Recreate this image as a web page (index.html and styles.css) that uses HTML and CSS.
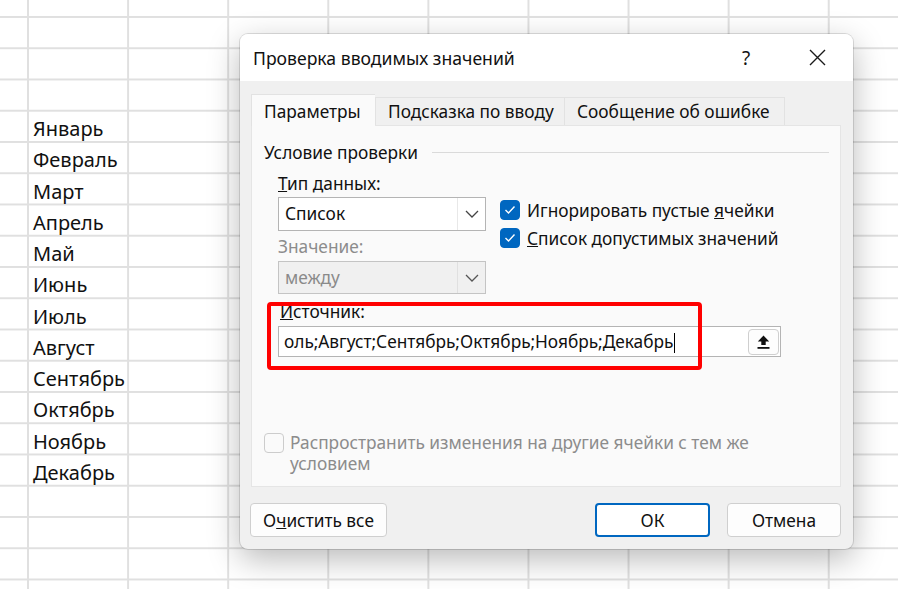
FILE: index.html
```html
<!DOCTYPE html>
<html lang="ru">
<head>
    <meta charset="UTF-8">
    <title>Проверка вводимых значений</title>
    <link rel="stylesheet" href="styles.css">
</head>
<body>
    <!-- Лист Excel -->
    <div class="sheet">
        <ul class="months">
            <li>Январь</li>
            <li>Февраль</li>
            <li>Март</li>
            <li>Апрель</li>
            <li>Май</li>
            <li>Июнь</li>
            <li>Июль</li>
            <li>Август</li>
            <li>Сентябрь</li>
            <li>Октябрь</li>
            <li>Ноябрь</li>
            <li>Декабрь</li>
        </ul>
    </div>

    <!-- Окно проверки данных -->
    <div class="dialog">
        <div class="titlebar">
            <span class="title">Проверка вводимых значений</span>
            <span class="tb-btn help">?</span>
            <span class="tb-btn close">
                <svg width="17" height="17" viewBox="0 0 17 17"><path d="M1 1 L16 16 M16 1 L1 16" stroke="#1a1a1a" stroke-width="1.4" fill="none"/></svg>
            </span>
        </div>

        <div class="dialog-body">
            <div class="tabs">
                <div class="tab active">Параметры</div>
                <div class="tab">Подсказка по вводу</div>
                <div class="tab">Сообщение об ошибке</div>
            </div>

            <div class="panel">
                <div class="group-head">
                    <span>Условие проверки</span>
                    <span class="group-line"></span>
                </div>

                <div class="fields">
                    <div class="top-row">
                        <div class="left-col">
                            <div class="label"><u>Т</u>ип данных:</div>
                            <div class="select">
                                <span class="select-value">Список</span>
                                <span class="chevron">
                                    <svg width="14" height="8" viewBox="0 0 14 8"><path d="M1 1 L7 7 L13 1" stroke="#444" stroke-width="1.3" fill="none"/></svg>
                                </span>
                            </div>
                            <div class="label disabled">Значение:</div>
                            <div class="select disabled">
                                <span class="select-value">между</span>
                                <span class="chevron">
                                    <svg width="14" height="8" viewBox="0 0 14 8"><path d="M1 1 L7 7 L13 1" stroke="#555" stroke-width="1.3" fill="none"/></svg>
                                </span>
                            </div>
                        </div>
                        <div class="right-col">
                            <label class="check">
                                <span class="box checked">
                                    <svg width="12" height="10" viewBox="0 0 12 10"><path d="M1.5 5 L4.5 8 L10.5 1.5" stroke="#fff" stroke-width="1.4" fill="none"/></svg>
                                </span>
                                <span>Игнорировать пустые <u>я</u>чейки</span>
                            </label>
                            <label class="check">
                                <span class="box checked">
                                    <svg width="12" height="10" viewBox="0 0 12 10"><path d="M1.5 5 L4.5 8 L10.5 1.5" stroke="#fff" stroke-width="1.4" fill="none"/></svg>
                                </span>
                                <span><u>С</u>писок допустимых значений</span>
                            </label>
                        </div>
                    </div>

                    <div class="label source-label"><u>И</u>сточник:</div>
                    <div class="source">
                        <span class="source-text">оль;Август;Сентябрь;Октябрь;Ноябрь;Декабрь</span>
                        <span class="pick-btn">
                            <svg width="13" height="14" viewBox="0 0 13 14"><path d="M6.5 0.5 L0.8 6.5 H4.3 V10 H8.7 V6.5 H12.2 Z" fill="#111"/><rect x="0.5" y="12" width="12" height="1.8" fill="#111"/></svg>
                        </span>
                    </div>
                </div>

                <label class="check spread">
                    <span class="box"></span>
                    <span>Распространить изменения на другие ячейки с тем же<br>условием</span>
                </label>
            </div>

            <div class="buttons">
                <button class="btn">О<u>ч</u>истить все</button>
                <span class="spacer"></span>
                <button class="btn primary">ОК</button>
                <button class="btn">Отмена</button>
            </div>
        </div>

        <!-- красная рамка вокруг поля -->
        <div class="highlight"></div>
    </div>
</body>
</html>
```

FILE: styles.css
```css
body {
    margin: 0;
    font-family: "Noto Sans", "Open Sans", sans-serif;
    color: #111111;
    background: #ffffff;
    overflow: hidden;
}

/* Лист */
.sheet {
    width: 898px;
    height: 589px;
    background-image:
        linear-gradient(to right, #e0e0e0 2px, transparent 2px),
        linear-gradient(to bottom, #e0e0e0 2px, transparent 2px);
    background-size: 100.1px 100%, 100% 31.25px;
    background-position: 27px 0, 0 16px;
}

.months {
    list-style: none;
    margin: 0;
    padding: 113px 0 0 33px;
    font-size: 20px;
    line-height: 31.25px;
}

/* Окно */
.dialog {
    position: absolute;
    left: 240px;
    top: 34px;
    width: 613px;
    height: 515px;
    border-radius: 8px;
    overflow: hidden;
    background: #f0f0f0;
    box-shadow: 0 0 0 1px rgba(0, 0, 0, 0.12), 0 10px 32px rgba(0, 0, 0, 0.28);
    font-size: 17.3px;
}

.titlebar {
    height: 47px;
    background: #ffffff;
    display: flex;
    align-items: center;
    padding: 0 12px 0 13px;
}

.title {
    flex: 1;
    font-size: 17.6px;
}

.tb-btn {
    width: 48px;
    display: flex;
    justify-content: center;
    align-items: center;
}

.help {
    font-size: 19px;
    margin-right: 23px;
}

.dialog-body {
    padding: 13px 12px 12px 11px;
}

/* Вкладки */
.tabs {
    display: flex;
    align-items: flex-end;
    height: 31px;
}

.tab {
    height: 28px;
    line-height: 27px;
    padding: 0 12px;
    border: 1px solid #e2e2e2;
    border-bottom: none;
    background: #f0f0f0;
    box-sizing: border-box;
    white-space: nowrap;
}

.tab:nth-child(2) { width: 190px; }
.tab:nth-child(3) { width: 220px; border-left: none; }

.tab.active {
    width: 124px;
    height: 32px;
    line-height: 33px;
    background: #fafafa;
    border-right: none;
    position: relative;
    margin-bottom: -1px;
    z-index: 1;
}

.panel {
    height: 362px;
    box-sizing: border-box;
    background: #fafafa;
    border: 1px solid #e5e5e5;
    padding: 14px 11px 0 12px;
}

.group-head {
    display: flex;
    align-items: center;
    height: 24px;
}

.group-line {
    flex: 1;
    height: 1px;
    background: #dadada;
    margin-left: 14px;
}

.fields {
    padding-left: 14px;
}

.top-row {
    display: flex;
}

.left-col {
    width: 208px;
}

.label {
    height: 24px;
    line-height: 24px;
    margin-top: 8px;
}

.label.disabled {
    color: #8c8c8c;
    margin-top: 4px;
}

.select {
    height: 34px;
    margin-top: 1px;
    display: flex;
    background: #ffffff;
    border: 1px solid #b4b4b4;
    box-sizing: border-box;
}

.select.disabled {
    height: 33px;
    margin-top: 2px;
    background: #f0f0f0;
    color: #8a8a8a;
    border-color: #c4c4c4;
}

.select-value {
    flex: 1;
    line-height: 31px;
    padding-left: 6px;
}

.chevron {
    width: 27px;
    border-left: 1px solid #e8e8e8;
    display: flex;
    align-items: center;
    justify-content: center;
}

.select.disabled .chevron {
    border-left-color: #e0e0e0;
}

.right-col {
    margin-left: 14px;
    padding-top: 32px;
}

.check {
    display: flex;
    align-items: center;
    height: 28px;
    gap: 7px;
    white-space: nowrap;
}

.box {
    width: 20px;
    height: 20px;
    box-sizing: border-box;
    border-radius: 4px;
    border: 1px solid #c8c8c8;
    background: #f6f6f6;
    display: flex;
    align-items: center;
    justify-content: center;
    flex-shrink: 0;
}

.box.checked {
    background: #0067c0;
    border-color: #0067c0;
}

.source-label {
    margin-top: 6px;
    padding-left: 2px;
}

.source {
    width: 503px;
    height: 31px;
    margin-top: 2px;
    display: flex;
    align-items: center;
    background: #ffffff;
    border: 1px solid #b4b4b4;
    box-sizing: border-box;
    padding: 0 1px 0 5px;
}

.source-text {
    flex: 1;
    white-space: nowrap;
}

.source-text::after {
    content: "";
    display: inline-block;
    width: 1px;
    height: 20px;
    background: #000;
    vertical-align: middle;
    margin-left: 1px;
}

.pick-btn {
    width: 31px;
    height: 26px;
    box-sizing: border-box;
    border: 1px solid #cfcfcf;
    border-radius: 4px;
    background: #fdfdfd;
    display: flex;
    align-items: center;
    justify-content: center;
}

.check.spread {
    align-items: flex-start;
    height: auto;
    margin-top: 75px;
    color: #8c8c8c;
    line-height: 21px;
    gap: 6px;
}

.check.spread .box {
    margin-top: 1px;
    background: transparent;
    border-color: #cccccc;
}

/* Кнопки */
.buttons {
    display: flex;
    margin-top: 16px;
    margin-left: -1px;
    gap: 17px;
}

.spacer {
    flex: 1;
}

.btn {
    height: 34px;
    width: 114px;
    font-family: inherit;
    font-size: 17.3px;
    color: #111111;
    background: #fdfdfd;
    border: 1px solid #cfcfcf;
    border-radius: 4px;
    padding: 0;
}

.btn:first-child {
    width: 137px;
}

.btn.primary {
    width: 115px;
    border: 2px solid #0067c0;
    background: #ffffff;
}

/* Красная рамка */
.highlight {
    position: absolute;
    left: 27px;
    top: 268px;
    width: 435px;
    height: 68px;
    box-sizing: border-box;
    border: 4px solid #ff0000;
    border-radius: 4px;
}
```
